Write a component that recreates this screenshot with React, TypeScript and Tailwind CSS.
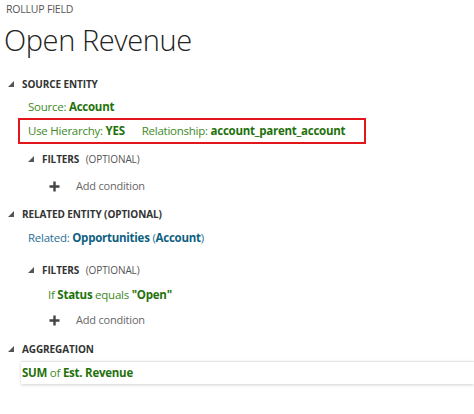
import type { ReactNode } from 'react';

const font = { fontFamily: '"Open Sans", "Noto Sans", sans-serif' };

function Caret() {
  return (
    <svg width="6" height="6" viewBox="0 0 6 6" className="shrink-0">
      <polygon points="6,0 6,6 0,6" fill="#555" />
    </svg>
  );
}

function Plus() {
  return (
    <svg width="11" height="11" viewBox="0 0 11 11" className="shrink-0">
      <path d="M5.5 0.5v10M0.5 5.5h10" stroke="#444" strokeWidth="2.4" />
    </svg>
  );
}

function Header({ indent, children, className = '' }: { indent: string; children: ReactNode; className?: string }) {
  return (
    <div className={`flex h-[20px] items-center whitespace-nowrap ${indent} ${className}`}>
      <Caret />
      <div className="ml-[8px] text-[10px] font-bold uppercase tracking-[-0.1px] text-[#333]">{children}</div>
    </div>
  );
}

function AddCondition({ className = '' }: { className?: string }) {
  return (
    <div className={`flex h-[20px] items-center pl-[49px] ${className}`}>
      <Plus />
      <span className="ml-[16px] text-[11px] tracking-[-0.2px] text-[#666]">Add condition</span>
    </div>
  );
}

const G = 'text-[#3c8a1e]';
const GB = 'font-bold text-[#1f720b]';
const body = 'text-[11.5px] tracking-[-0.25px] whitespace-nowrap';

export default function App() {
  return (
    <div className="h-[414px] w-[474px] overflow-hidden bg-white" style={font}>
      <div className="h-[14px] pl-[6px] pt-[2px] text-[10.5px] leading-[14px] tracking-[-0.2px] text-[#555]">ROLLUP FIELD</div>
      <div className="mt-[6px] h-[40px] pl-[4px] text-[29px] font-light leading-[40px] tracking-[-0.4px] text-[#222]">
        Open Revenue
      </div>

      <Header indent="pl-[8px]" className="mt-[14px]">Source Entity</Header>
      <div className={`mt-[3px] h-[20px] pl-[28px] leading-[20px] ${body} ${G}`}>
        Source: <span className={GB}>Account</span>
      </div>
      <div className={`ml-[18px] mt-[1px] flex h-[26px] w-[348px] items-center border-2 border-[#e3161c] pl-[8px] ${body} ${G}`}>
        <span>
          Use Hierarchy: <span className={GB}>YES</span>
        </span>
        <span className="ml-[17px]">
          Relationship: <span className={GB}>account_parent_account</span>
        </span>
      </div>

      <Header indent="pl-[28px]" className="mt-[5px]">
        Filters <span className="ml-[4px] font-normal text-[#555]">(OPTIONAL)</span>
      </Header>
      <AddCondition className="mt-[7px]" />

      <Header indent="pl-[8px]" className="mt-[8px]">Related Entity (Optional)</Header>
      <div className={`mt-[4px] h-[20px] pl-[28px] leading-[20px] text-[#2a6f97] ${body}`}>
        Related: <span className="font-bold text-[#0f5f82]">Opportunities</span> (
        <span className="font-bold text-[#0f5f82]">Account</span>)
      </div>

      <Header indent="pl-[28px]" className="mt-[12px]">
        Filters <span className="ml-[4px] font-normal text-[#555]">(OPTIONAL)</span>
      </Header>
      <div className={`mt-[5px] h-[20px] pl-[48px] leading-[20px] ${body} ${G}`}>
        If <span className={GB}>Status</span> equals <span className={GB}>"Open"</span>
      </div>
      <AddCondition className="mt-[5px]" />

      <Header indent="pl-[8px]" className="mt-[9px]">Aggregation</Header>
      <div className={`ml-[21px] mt-[2px] h-[23px] border-t border-[#e6e6e6] pl-[1px] leading-[22px] shadow-[0_1px_3px_rgba(0,0,0,0.18)] ${body} ${G}`}>
        <span className={GB}>SUM</span> of <span className={GB}>Est. Revenue</span>
      </div>
    </div>
  );
}
